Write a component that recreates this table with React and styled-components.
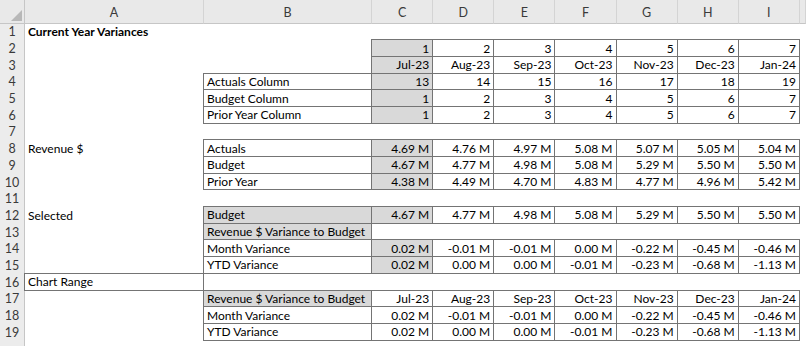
import React from "react";
import styled, { createGlobalStyle } from "styled-components";

const Global = createGlobalStyle`
  html, body { margin: 0; padding: 0; background: #fff; }
  body { font-family: "Lato", "Liberation Sans", sans-serif; overflow: hidden; }
`;

const ROW_H = 16.7;
const COLS = ["A", "B", "C", "D", "E", "F", "G", "H", "I", ""];

const Sheet = styled.div`
  display: grid;
  grid-template-columns: 25px 179px 168px repeat(7, 61.14px) 1fr;
  grid-template-rows: 23.5px repeat(20, ${ROW_H}px);
  width: 806px;
  height: 346px;
  overflow: hidden;
  font-size: 12px;
  color: #000;
`;

const Corner = styled.div`
  position: relative;
  background: #e9e9e9;
  border-right: 1px solid #c6c6c6;
  border-bottom: 1px solid #c6c6c6;
  box-sizing: border-box;
  svg { position: absolute; right: 2px; bottom: 2px; }
`;

const ColHead = styled.div`
  background: #e9e9e9;
  border-right: 1px solid #d4d4d4;
  border-bottom: 1px solid #c6c6c6;
  box-sizing: border-box;
  display: flex;
  align-items: center;
  justify-content: center;
  color: #3a3a3a;
  font-size: 12.5px;
  padding-top: 2px;
`;

const RowHead = styled.div`
  background: #ececec;
  border-right: 1px solid #c6c6c6;
  box-sizing: border-box;
  display: flex;
  align-items: center;
  justify-content: center;
  color: #3a3a3a;
  font-size: 12.5px;
`;

const Cell = styled.div`
  box-sizing: border-box;
  display: flex;
  align-items: center;
  justify-content: ${(p) => (p.$right ? "flex-end" : "flex-start")};
  padding: 0 3px 0 3px;
  white-space: nowrap;
  overflow: visible;
  font-weight: ${(p) => (p.$bold ? 700 : 400)};
  background: ${(p) => (p.$fill ? "#d9d9d9" : "transparent")};
  ${(p) => p.$box && `border: 1px solid #747474; margin: -1px 0 0 -1px;`}
  position: relative;
  z-index: ${(p) => (p.$box ? 1 : 0)};
`;

const months = ["Jul-23", "Aug-23", "Sep-23", "Oct-23", "Nov-23", "Dec-23", "Jan-24"];
const idx = [1, 2, 3, 4, 5, 6, 7];
const monthVar = ["0.02 M", "-0.01 M", "-0.01 M", "0.00 M", "-0.22 M", "-0.45 M", "-0.46 M"];
const ytdVar = ["0.02 M", "0.00 M", "0.00 M", "-0.01 M", "-0.23 M", "-0.68 M", "-1.13 M"];
const budget = ["4.67 M", "4.77 M", "4.98 M", "5.08 M", "5.29 M", "5.50 M", "5.50 M"];

const rows = [
  { a: "Current Year Variances", aBold: true },
  { vals: idx, cFill: true },
  { vals: months, cFill: true },
  { b: "Actuals Column", bBox: true, vals: [13, 14, 15, 16, 17, 18, 19], cFill: true },
  { b: "Budget Column", bBox: true, vals: idx, cFill: true },
  { b: "Prior Year Column", bBox: true, vals: idx, cFill: true },
  {},
  { a: "Revenue $", b: "Actuals", bBox: true, vals: ["4.69 M", "4.76 M", "4.97 M", "5.08 M", "5.07 M", "5.05 M", "5.04 M"], cFill: true },
  { b: "Budget", bBox: true, vals: budget, cFill: true },
  { b: "Prior Year", bBox: true, vals: ["4.38 M", "4.49 M", "4.70 M", "4.83 M", "4.77 M", "4.96 M", "5.42 M"], cFill: true },
  {},
  { a: "Selected", b: "Budget", bBox: true, bFill: true, vals: budget, cFill: true },
  { b: "Revenue $ Variance to Budget", bBox: true, bFill: true },
  { b: "Month Variance", bBox: true, vals: monthVar, cFill: true },
  { b: "YTD Variance", bBox: true, vals: ytdVar, cFill: true },
  { a: "Chart Range", aBox: true },
  { b: "Revenue $ Variance to Budget", bBox: true, bFill: true, vals: months },
  { b: "Month Variance", bBox: true, vals: monthVar },
  { b: "YTD Variance", bBox: true, vals: ytdVar },
  { noLabel: true },
];

export default function App() {
  return (
    <>
      <Global />
      <Sheet>
        <Corner>
          <svg width="11" height="11" viewBox="0 0 11 11">
            <polygon points="11,0 11,11 0,11" fill="#b8b8b8" />
          </svg>
        </Corner>
        {COLS.map((c, i) => (
          <ColHead key={"h" + i}>{c}</ColHead>
        ))}
        {rows.map((r, ri) => (
          <React.Fragment key={ri}>
            <RowHead>{r.noLabel ? "" : ri + 1}</RowHead>
            <Cell $bold={r.aBold} $box={r.aBox}>{r.a}</Cell>
            <Cell $box={r.bBox} $fill={r.bFill}>{r.b}</Cell>
            {Array.from({ length: 7 }).map((_, ci) => (
              <Cell key={ci} $right $box={!!r.vals} $fill={r.cFill && ci === 0}>
                {r.vals ? r.vals[ci] : ""}
              </Cell>
            ))}
            <Cell />
          </React.Fragment>
        ))}
      </Sheet>
    </>
  );
}
